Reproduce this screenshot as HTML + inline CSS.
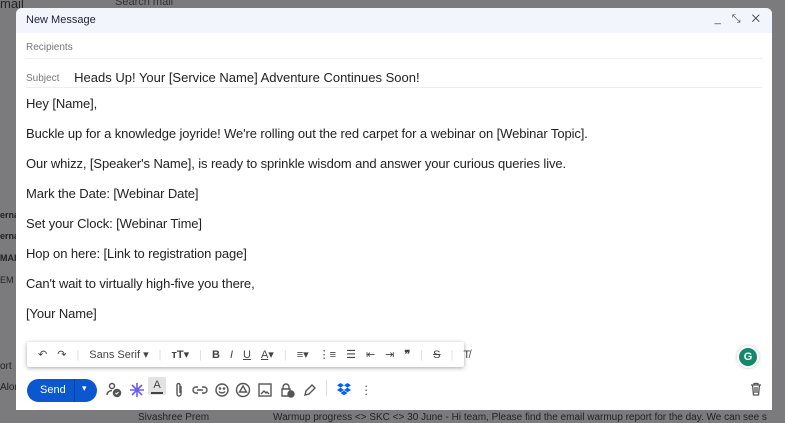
<!DOCTYPE html>
<html><head><meta charset="utf-8"><style>
*{margin:0;padding:0;box-sizing:border-box}
body{width:785px;height:421px;overflow:hidden;background:#7b7b7d;font-family:"Liberation Sans",sans-serif;position:relative}
.bgt{position:absolute;color:#222;font-size:11px;white-space:nowrap}
.dlg{position:absolute;left:16px;top:8px;width:756px;height:402px;background:#fff;border-radius:6px 6px 0 0;overflow:hidden}
.hd{height:25px;background:#f2f6fc;color:#1f1f3a;font-size:11px;padding:6px 0 0 10px;position:relative}
.hd .ic{position:absolute;right:8px;top:5px;font-size:11px;color:#444;letter-spacing:4px}
.row{position:absolute;left:10px;right:10px;border-bottom:1px solid #eee;font-size:10px;color:#777}
.body{position:absolute;left:10px;top:81px;font-size:13px;color:#222;line-height:30px;letter-spacing:-0.1px;white-space:nowrap}
.tb{position:absolute;left:11px;top:334px;width:437px;height:25px;background:#fff;box-shadow:0 1px 4px rgba(0,0,0,.35);border-radius:2px;display:flex;align-items:center;font-size:11px;color:#444;white-space:nowrap;padding-left:6px}
.tb span{margin:0 5px}
.sep{color:#ddd}
.send{position:absolute;left:11px;top:371px;width:70px;height:23px;background:#0b57d0;border-radius:12px;color:#fff;font-size:11px}
.f{position:absolute;top:374px}
</style></head><body>
<div class="bgt" style="left:0;top:-4px;font-size:13px">mail</div>
<div class="bgt" style="left:115px;top:-4px;color:#333">Search mail</div>
<div class="bgt" style="left:0;top:210px;font-weight:bold;font-size:9px">erna</div>
<div class="bgt" style="left:0;top:231px;font-weight:bold;font-size:9px">erna</div>
<div class="bgt" style="left:0;top:253px;font-weight:bold;font-size:9px">MAII</div>
<div class="bgt" style="left:0;top:275px;font-size:9px">EM</div>
<div class="bgt" style="left:0;top:361px;font-size:10px">ort</div>
<div class="bgt" style="left:0;top:382px;font-size:10px">Alor</div>
<div class="bgt" style="left:138px;top:412px;font-size:10px">Sivashree Prem</div>
<div class="bgt" style="left:273px;top:412px;font-size:10px">Warmup progress &lt;&gt; SKC &lt;&gt; 30 June - Hi team, Please find the email warmup report for the day. We can see s</div>
<div class="dlg">
 <div class="hd">New Message<span class="ic">_ ⤡ ✕</span></div>
 <div class="row" style="top:25px;height:26px;padding-top:9px">Recipients</div>
 <div class="row" style="top:51px;height:29px;padding-top:10px">Subject <span style="font-size:13px;color:#222;margin-left:12px;position:relative;top:1px">Heads Up! Your [Service Name] Adventure Continues Soon!</span></div>
 <div class="body">
  Hey [Name],<br>Buckle up for a knowledge joyride! We're rolling out the red carpet for a webinar on [Webinar Topic].<br>Our whizz, [Speaker's Name], is ready to sprinkle wisdom and answer your curious queries live.<br>Mark the Date: [Webinar Date]<br>Set your Clock: [Webinar Time]<br>Hop on here: [Link to registration page]<br>Can't wait to virtually high-five you there,<br>[Your Name]
 </div>
 <div class="tb"><span>↶</span><span>↷</span><span class="sep">|</span><span>Sans Serif ▾</span><span class="sep">|</span><span><b>ᴛT</b>▾</span><span class="sep">|</span><span><b>B</b></span><span><i>I</i></span><span><u>U</u></span><span><u>A</u>▾</span><span class="sep">|</span><span>≡▾</span><span>⋮≡</span><span>☰</span><span>⇤</span><span>⇥</span><span><b>❞</b></span><span class="sep">|</span><span><s>S</s></span><span class="sep">|</span><span>T̸</span></div>
 <div class="send"><span style="position:absolute;left:13px;top:5px">Send</span><span style="position:absolute;left:47px;top:0;height:23px;border-left:1px solid #0842a0"></span><span style="position:absolute;left:55px;top:4px;font-size:9px">▾</span></div>
 <svg class="f" style="left:90px" width="16" height="16" viewBox="0 0 16 16" fill="none" stroke="#555" stroke-width="1.5"><circle cx="6" cy="4" r="2.5"/><path d="M1 13c0-3 3-4.5 5-4.5"/><circle cx="11" cy="11" r="3.5" fill="#555"/><path d="M9.5 11l1 1 2-2" stroke="#fff" stroke-width="1"/></svg>
 <svg class="f" style="left:113px" width="16" height="16" viewBox="0 0 16 16" stroke="#6b5cf5" stroke-width="1.6"><path d="M8 1v14M1 8h14M3 3l10 10M13 3L3 13"/></svg>
 <div style="position:absolute;left:132px;top:369px;width:18px;height:18px;background:#e3e3e3;border-radius:2px;text-align:center;font-size:11px;color:#444;padding-top:2px">A<div style="margin:1px 3px 0;height:2px;background:#444"></div></div>
 <svg class="f" style="left:157px" width="12" height="16" viewBox="0 0 12 16" fill="none" stroke="#555" stroke-width="1.4"><path d="M8 4v8a2 2 0 0 1-4 0V3a1.5 1.5 0 0 1 3 0v8"/></svg>
 <svg class="f" style="left:176px" width="16" height="16" viewBox="0 0 16 16" fill="none" stroke="#555" stroke-width="1.4"><path d="M6 5H4a3 3 0 0 0 0 6h2M10 5h2a3 3 0 0 1 0 6h-2M5 8h6"/></svg>
 <svg class="f" style="left:198px" width="16" height="16" viewBox="0 0 16 16" fill="none" stroke="#555" stroke-width="1.4"><circle cx="8" cy="8" r="6"/><path d="M5 9.5c1.5 2 4.5 2 6 0"/><circle cx="6" cy="6.5" r=".6"/><circle cx="10" cy="6.5" r=".6"/></svg>
 <svg class="f" style="left:219px" width="16" height="16" viewBox="0 0 16 16" fill="none" stroke="#555" stroke-width="1.4"><circle cx="8" cy="8" r="6.5"/><path d="M8 4l3.5 6h-7z"/></svg>
 <svg class="f" style="left:241px" width="16" height="16" viewBox="0 0 16 16" fill="none" stroke="#555" stroke-width="1.4"><rect x="2" y="2" width="12" height="12"/><path d="M4 12l3-3 2 2 1-1 2 2"/></svg>
 <svg class="f" style="left:263px" width="16" height="16" viewBox="0 0 16 16" fill="none" stroke="#555" stroke-width="1.4"><path d="M4 7V5a3 3 0 0 1 6 0v2M3 7h8v7H3z"/><circle cx="12" cy="12" r="3" fill="#555"/></svg>
 <svg class="f" style="left:286px" width="14" height="16" viewBox="0 0 14 16" fill="none" stroke="#555" stroke-width="1.4"><path d="M3 13l1-4 6-6 3 3-6 6z"/></svg>
 <div style="position:absolute;left:310px;top:372px;height:16px;border-left:1px solid #ddd"></div>
 <svg class="f" style="left:321px" width="14" height="14" viewBox="0 0 14 14" fill="#0061fe"><path d="M3.5 1L0 3.3l3.5 2.3L7 3.3zM10.5 1L7 3.3l3.5 2.3L14 3.3zM0 8l3.5 2.3L7 8 3.5 5.6zM10.5 5.6L7 8l3.5 2.3L14 8zM3.5 11L7 13.3 10.5 11 7 8.7z"/></svg>
 <div style="position:absolute;left:348px;top:376px;font-size:13px;color:#555;line-height:4px">·<br>·<br>·</div>
 <svg class="f" style="left:734px" width="12" height="14" viewBox="0 0 12 14" fill="none" stroke="#555" stroke-width="1.3"><path d="M1 3h10M4 3V1.5h4V3M2.5 3l1 10h5l1-10M5 5v6M7 5v6"/></svg>
 <div style="position:absolute;left:723px;top:340px;width:18px;height:18px;border-radius:50%;background:#15876a;color:#fff;font-size:11px;font-weight:bold;text-align:center;line-height:18px;box-shadow:0 0 0 2px #fff,0 0 2px 3px #ddd">G</div>
</div>
</body></html>
